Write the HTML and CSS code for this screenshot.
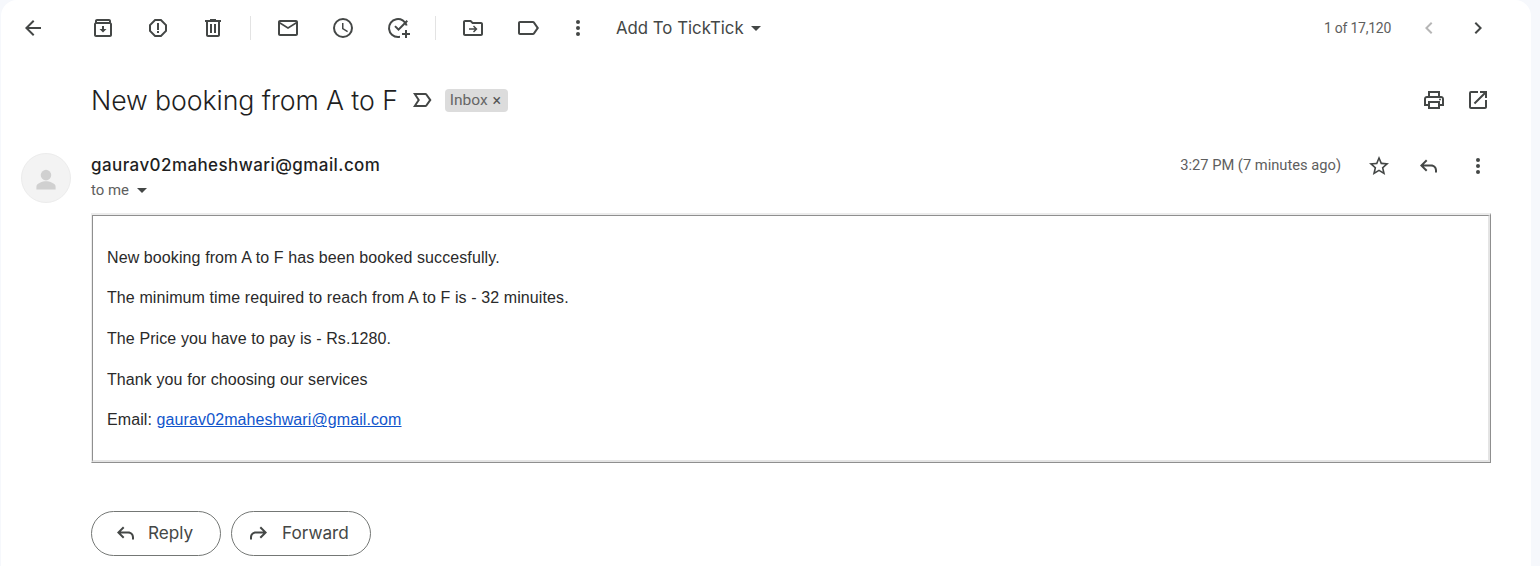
FILE: index.html
```html
<!DOCTYPE html>
<html lang="en">
<head>
<meta charset="utf-8">
<title>New booking from A to F</title>
<link rel="stylesheet" href="styles.css">
</head>
<body>
<main class="card">
  <div class="toolbar">
    <span class="ic back"><svg viewBox="0 0 24 24"><path d="M20 11H7.830l5.590-5.590L12 4l-8 8 8 8 1.410-1.410L7.830 13H20z"/></svg></span>
    <div class="group g1">
      <span class="ic"><svg viewBox="0 0 24 24"><path d="M20 6.500V5c0-1.100-.9-2-2-2H6C4.900 3 4 3.900 4 5v1.500C3.400 6.800 3 7.400 3 8v11c0 1.100.9 2 2 2h14c1.100 0 2-.9 2-2V8c0-.6-.4-1.200-1-1.500zM6 5h12v1H6zm13 14H5V8h14z"/><path d="M13 10h-2v3H8.500l3.500 3.500 3.500-3.500H13z"/></svg></span>
      <span class="ic"><svg viewBox="0 0 24 24"><path d="M15.320 3H8.680L3 8.680v6.640L8.680 21h6.640L21 15.320V8.680zM19 14.500 14.500 19h-5L5 14.500v-5L9.500 5h5L19 9.500z"/><path d="M11 7h2v7h-2zM11 15h2v2h-2z"/></svg></span>
      <span class="ic"><svg viewBox="0 0 24 24"><path d="M15 4V3H9v1H4v2h1v13c0 1.100.9 2 2 2h10c1.100 0 2-.9 2-2V6h1V4zm2 15H7V6h10z"/><path d="M9 8h2v9H9zM13 8h2v9h-2z"/></svg></span>
    </div>
    <div class="group g2">
      <span class="ic"><svg viewBox="0 0 24 24"><path d="M20 4H4c-1.100 0-2 .9-2 2v12c0 1.100.9 2 2 2h16c1.100 0 2-.9 2-2V6c0-1.100-.9-2-2-2zm0 14H4V8l8 5 8-5zm-8-7L4 6h16z"/></svg></span>
      <span class="ic"><svg viewBox="0 0 24 24"><path d="M12 2a10 10 0 1 0 0 20 10 10 0 0 0 0-20zm0 18a8 8 0 1 1 0-16 8 8 0 0 1 0 16z"/><path d="M12.500 7H11v6l5.200 3.200.8-1.300-4.500-2.700z"/></svg></span>
      <span class="ic"><svg viewBox="0 0 24 24"><path d="M12 20a8 8 0 1 1 7.700-10.200l1.900-.6A10 10 0 1 0 12 22c.7 0 1.400-.1 2-.2v-2c-.6.100-1.300.2-2 .2z"/><path d="m22 5.500-9.500 9.500-4.200-4.200 1.400-1.400 2.800 2.800 8.100-8.100zM19 14h2v3h3v2h-3v3h-2v-3h-3v-2h3z"/></svg></span>
    </div>
    <div class="group g3">
      <span class="ic"><svg viewBox="0 0 24 24"><path d="M20 6h-8l-2-2H4c-1.100 0-2 .9-2 2v12c0 1.100.9 2 2 2h16c1.100 0 2-.9 2-2V8c0-1.100-.9-2-2-2zm0 12H4V6h5.200l2 2H20z"/><path d="M13 9.500 12 10.500l1.700 1.700H8v1.600h5.700L12 15.500l1 1 3.500-3.500z"/></svg></span>
      <span class="ic"><svg viewBox="0 0 24 24"><path d="M17 5H4c-1.100 0-2 .9-2 2v10c0 1.100.9 2 2 2h13c.6 0 1.200-.3 1.600-.8L23 12l-4.400-6.200C18.200 5.300 17.600 5 17 5zm0 12H4V7h13l3.500 5z"/></svg></span>
      <span class="ic more"><svg viewBox="0 0 24 24"><circle cx="12" cy="6" r="2"/><circle cx="12" cy="12" r="2"/><circle cx="12" cy="18" r="2"/></svg></span>
    </div>
    <div class="tick">Add To TickTick<i class="caret"></i></div>
    <div class="pager">
      <span class="count">1 of 17,120</span>
      <span class="ic dim"><svg viewBox="0 0 24 24"><path d="M15.410 7.410 14 6l-6 6 6 6 1.410-1.410L10.830 12z"/></svg></span>
      <span class="ic"><svg viewBox="0 0 24 24"><path d="M10 6 8.590 7.410 13.170 12l-4.580 4.590L10 18l6-6z"/></svg></span>
    </div>
  </div>

  <div class="subject-row">
    <h1 class="subject">New booking from A to F</h1>
    <span class="ic important"><svg viewBox="0 0 24 24"><path d="M4 5h12.500c.6 0 1.100.3 1.500.8L22.500 12 18 18.200c-.4.500-.9.800-1.500.800H4l4.600-7zm3.600 2 3.300 5-3.300 5h8.900l3.500-5-3.500-5z"/></svg></span>
    <span class="chip">Inbox<span class="x">×</span></span>
    <div class="subject-actions">
      <span class="ic"><svg viewBox="0 0 24 24"><path d="M19 8h-1V3H6v5H5c-1.700 0-3 1.300-3 3v7h4v3h12v-3h4v-7c0-1.700-1.300-3-3-3zM8 5h8v3H8zm8 14H8v-4h8zm4-3h-2v-3H6v3H4v-5c0-.6.400-1 1-1h14c.6 0 1 .4 1 1z"/><circle cx="18" cy="11.500" r="1"/></svg></span>
      <span class="ic"><svg viewBox="0 0 24 24"><path d="M19 19H5V5h7V3H5a2 2 0 0 0-2 2v14c0 1.100.9 2 2 2h14c1.100 0 2-.9 2-2v-7h-2z"/><path d="M14 3v2h3.590l-9.830 9.830 1.410 1.410L19 6.410V10h2V3z"/></svg></span>
    </div>
  </div>

  <div class="message">
    <div class="avatar"><svg viewBox="0 0 50 50"><circle cx="25" cy="22" r="5.500"/><path d="M15 37v-3c0-3.500 6.500-5.500 10-5.500s10 2 10 5.500v3z"/></svg></div>
    <div class="message-main">
      <div class="meta">
        <div class="from">
          <div class="sender">gaurav02maheshwari@gmail.com</div>
          <div class="to">to me<i class="caret small"></i></div>
        </div>
        <div class="meta-right">
          <span class="time">3:27 PM (7 minutes ago)</span>
          <span class="ic"><svg viewBox="0 0 24 24"><path d="M22 9.240l-7.190-.62L12 2 9.190 8.630 2 9.240l5.460 4.730L5.820 21 12 17.270 18.180 21l-1.630-7.030zM12 15.400l-3.760 2.270 1-4.280-3.320-2.880 4.380-.38L12 6.100l1.710 4.040 4.380.38-3.320 2.880 1 4.280z"/></svg></span>
          <span class="ic"><svg viewBox="0 0 24 24"><path d="M21 16.500v2h-2v-2c0-2.500-1.500-4-4-4H7.800l3.600 3.600L10 17.500 4 11.500l6-6 1.400 1.400-3.600 3.600H15c3.600 0 6 2.400 6 6z"/></svg></span>
          <span class="ic last"><svg viewBox="0 0 24 24"><circle cx="12" cy="6" r="2"/><circle cx="12" cy="12" r="2"/><circle cx="12" cy="18" r="2"/></svg></span>
        </div>
      </div>
      <div class="body-box">
        <div class="body-cell">
          <p>New booking from A to F has been booked succesfully.</p>
          <p>The minimum time required to reach from A to F is - 32 minuites.</p>
          <p>The Price you have to pay is - Rs.1280.</p>
          <p>Thank you for choosing our services</p>
          <p>Email: <a href="#">gaurav02maheshwari@gmail.com</a></p>
        </div>
      </div>
      <div class="actions">
        <a class="btn reply" href="#"><svg viewBox="0 0 24 24"><path d="M21 16.500v2h-2v-2c0-2.500-1.500-4-4-4H7.800l3.600 3.600L10 17.500 4 11.500l6-6 1.400 1.400-3.600 3.600H15c3.600 0 6 2.400 6 6z"/></svg>Reply</a>
        <a class="btn forward" href="#"><svg viewBox="0 0 24 24"><path d="M3 16.500v2h2v-2c0-2.500 1.500-4 4-4h7.200l-3.600 3.600 1.400 1.400 6-6-6-6-1.400 1.400 3.600 3.600H9c-3.600 0-6 2.400-6 6z"/></svg>Forward</a>
      </div>
    </div>
  </div>
</main>
</body>
</html>
```
FILE: styles.css
```css
* { box-sizing: border-box; }
html, body { margin: 0; height: 100%; }
body {
  background: #f6f8fc;
  font-family: Roboto, "Noto Sans", sans-serif;
  color: #444746;
  overflow: hidden;
  padding-left: 1px;
  padding-right: 9px;
}
.card {
  background: #fff;
  height: 566px;
  border-radius: 16px 16px 0 0;
  overflow: hidden;
}
.ic { display: inline-flex; width: 24px; height: 24px; flex: none; }
.ic svg { width: 24px; height: 24px; fill: #444746; display: block; }
.toolbar { display: flex; align-items: center; height: 56px; padding-left: 20px; }
.group { display: flex; align-items: center; gap: 31px; height: 24px; }
.g1 { margin-left: 46px; padding-right: 25px; border-right: 1px solid #e3e3e3; }
.g2 { margin-left: 25px; padding-right: 25px; border-right: 1px solid #e3e3e3; }
.g3 { margin-left: 25px; }
.more { margin-left: -5px; }
.tick { margin-left: 26px; font-family: Inter, Roboto, sans-serif; font-size: 16.800px; color: #444746; display: flex; align-items: center; }
.caret { display: inline-block; width: 0; height: 0; border: 5px solid transparent; border-top-color: #444746; border-bottom-width: 0; margin-left: 7px; }
.caret.small { margin-left: 8px; }
.pager { margin-left: auto; display: flex; align-items: center; font-size: 14px; letter-spacing: -.25px; margin-right: 41px; }
.count { margin-right: 26px; color: #5e5e5e; }
.pager .ic + .ic { margin-left: 25px; }
.dim svg { fill: #b6b6b6; }
.subject-row { display: flex; align-items: center; height: 40px; margin-top: 24px; padding-left: 90px; padding-right: 41px; }
.subject { margin: 0; font-weight: 300; font-size: 26.700px; color: #1f1f1f; font-family: Inter, "Noto Sans", sans-serif; letter-spacing: -.1px; white-space: nowrap; }
.important { margin-left: 11px; }
.chip { margin-left: 12px; background: #dcdcdc; color: #666; border-radius: 4px; height: 23px; width: 63px; padding: 0 5px; font-size: 15.500px; display: inline-flex; align-items: center; }
.x { margin-left: 5px; font-size: 16px; color: #555; }
.subject-actions { margin-left: auto; display: flex; gap: 20px; }
.message { display: flex; padding-left: 20px; margin-top: 29px; }
.avatar { width: 50px; height: 50px; border-radius: 50%; background: #f3f3f3; border: 1px solid #ececec; flex: none; margin-top: 4px; }
.avatar svg { width: 100%; height: 100%; fill: #d0d0d0; display: block; }
.message-main { flex: 1; margin-left: 20px; padding-right: 40px; }
.meta { display: flex; justify-content: space-between; height: 64px; padding-top: 3px; }
.sender { font-weight: 500; font-size: 17px; letter-spacing: .42px; color: #1f1f1f; line-height: 26px; font-family: Inter, Roboto, sans-serif; }
.to { font-size: 14.900px; color: #5e5e5e; line-height: 24px; display: flex; align-items: center; }
.meta-right { display: flex; align-items: flex-start; padding-top: 2px; padding-right: 1px; }
.time { font-size: 14.700px; color: #5e5e5e; margin: 1px 26px 0 0; line-height: 20px; }
.meta-right .ic + .ic { margin-left: 25px; }
.meta-right .ic.last { margin-left: 26px; }
.body-box {
  height: 250px;
  border-style: solid;
  border-width: 2px 1px 1px 1px;
  border-color: #ececec #8f8f8f #8f8f8f #ececec;
}
.body-cell {
  height: 100%;
  border-style: solid;
  border-width: 1px 2px 2px 1px;
  border-color: #8f8f8f #e4e4e4 #e4e4e4 #8f8f8f;
  padding: 10px 14px;
  font-family: "Liberation Sans", Arial, sans-serif;
  font-size: 16px;
  letter-spacing: .1px;
  color: #2a2a2a;
}
.body-cell p { margin: 0; line-height: 18px; padding-top: 22.700px; }
.body-cell a { color: #1155cc; }
.actions { display: flex; gap: 10px; margin-top: 48px; }
.btn { display: flex; align-items: center; height: 45px; padding-bottom: 2px; border: 1px solid #747775; border-radius: 23px; color: #444746; text-decoration: none; font-family: Inter, Roboto, sans-serif; font-size: 17.200px; font-weight: 400; }
.btn svg { width: 24px; height: 24px; fill: #444746; margin-right: 11px; }
.reply { width: 130px; padding-left: 21px; }
.forward { width: 140px; padding-left: 15px; }
```
